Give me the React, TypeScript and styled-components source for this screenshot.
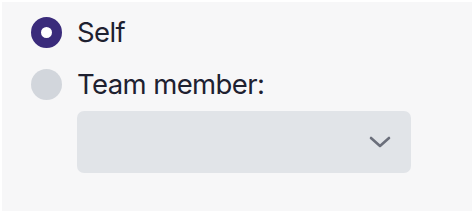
import React, { useState } from 'react';
import styled, { createGlobalStyle } from 'styled-components';

const GlobalStyle = createGlobalStyle`
  body {
    margin: 0;
    background: #ffffff;
    font-family: Inter, "Noto Sans", sans-serif;
  }
`;

const options = [
  { id: 'self', label: 'Self' },
  { id: 'member', label: 'Team member:' },
];

const App: React.FC = () => {
  const [choice, setChoice] = useState('self');

  return (
    <>
      <GlobalStyle />
      <Panel>
        {options.map((opt, i) => (
          <Option key={opt.id} $last={i === options.length - 1} onClick={() => setChoice(opt.id)}>
            <Radio $checked={choice === opt.id} />
            <Label>{opt.label}</Label>
          </Option>
        ))}
        <Select>
          <svg width="22" height="12" viewBox="0 0 22 12" fill="none">
            <path d="M2 2l9 8 9-8" stroke="#6b6f7b" strokeWidth="2.6" strokeLinecap="round" strokeLinejoin="round" />
          </svg>
        </Select>
      </Panel>
    </>
  );
};

export default App;

const Panel = styled('div')({
  margin: '2px',
  width: '470px',
  height: '209px',
  boxSizing: 'border-box',
  background: '#f7f7f8',
  padding: '14px 0 0 29px',
  display: 'flex',
  flexDirection: 'column',
});

const Option = styled('div')<{ $last?: boolean }>`
  display: flex;
  align-items: center;
  gap: 15px;
  height: 32px;
  margin-bottom: ${(p) => (p.$last ? '11px' : '20px')};
  cursor: pointer;
`;

const Radio = styled('span')<{ $checked: boolean }>`
  width: 31px;
  height: 31px;
  border-radius: 50%;
  box-sizing: border-box;
  flex-shrink: 0;
  background: ${(p) => (p.$checked ? '#ffffff' : '#d2d6dc')};
  border: ${(p) => (p.$checked ? '10px solid #3a2b7b' : 'none')};
`;

const Label = styled('span')({
  fontSize: '27.5px',
  lineHeight: '32px',
  letterSpacing: '-0.6px',
  color: '#1e2130',
});

const Select = styled('div')({
  marginLeft: '46px',
  width: '334px',
  height: '62px',
  borderRadius: '7px',
  background: '#e1e4e8',
  display: 'flex',
  alignItems: 'center',
  justifyContent: 'flex-end',
  paddingRight: '20px',
  boxSizing: 'border-box',
});
